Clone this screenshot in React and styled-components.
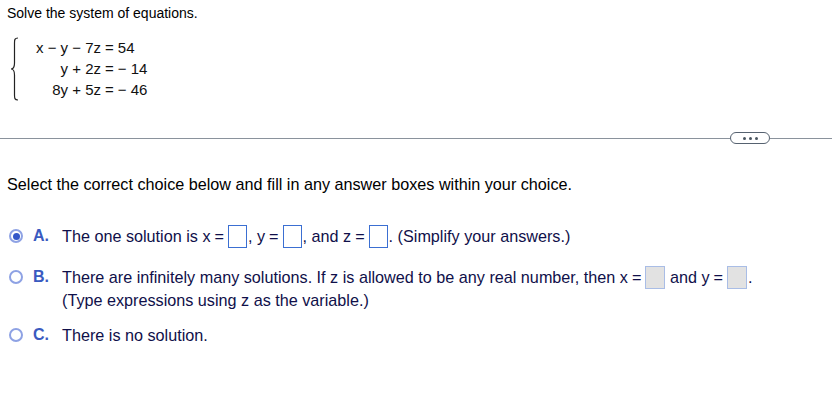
import styled, { createGlobalStyle } from 'styled-components';

const GlobalStyle = createGlobalStyle`
  html, body {
    margin: 0;
    padding: 0;
    background: #FFFFFF;
  }
  body {
    font-family: 'Liberation Sans', Arial, sans-serif;
    color: #000000;
  }
`;

function Brace() {
  return (
    <BraceSvg width="10" height="64" viewBox="0 0 10 64">
      <path
        d="M8 1 C4.5 1 4.5 3 4.5 6 L4.5 26 C4.5 30 3.5 32 1 32 C3.5 32 4.5 34 4.5 38 L4.5 58 C4.5 61 4.5 63 8 63"
        fill="none"
        stroke="#222222"
        strokeWidth="1.2"
      />
    </BraceSvg>
  );
}

function AnswerBox({ filled }) {
  return <Box $filled={filled} />;
}

function Radio({ checked }) {
  return <RadioRing $checked={checked}>{checked && <RadioDot />}</RadioRing>;
}

const equations = [
  { left: 'x − y − 7z', right: '54' },
  { left: 'y + 2z', right: '− 14' },
  { left: '8y + 5z', right: '− 46' },
];

function App() {
  return (
    <>
      <GlobalStyle />
      <Page>
        <Section>
          <Title>Solve the system of equations.</Title>
          <System>
            <Brace />
            <EqGrid>
              {equations.map((eq) => (
                <Eq key={eq.left}>
                  <EqLeft>{eq.left}</EqLeft>
                  <EqSign>=</EqSign>
                  <EqRight>{eq.right}</EqRight>
                </Eq>
              ))}
            </EqGrid>
          </System>
        </Section>

        <Divider>
          <Line />
          <Pill>
            <Dot />
            <Dot />
            <Dot />
          </Pill>
          <Line $short />
        </Divider>

        <Section>
          <Prompt>Select the correct choice below and fill in any answer boxes within your choice.</Prompt>
          <Choices>
            <Choice $gap={18}>
              <Radio checked />
              <Letter>A.</Letter>
              <ChoiceBody>
                <TextLine>
                  The one solution is x<Eqs>=</Eqs>
                  <AnswerBox />
                  <Comma>,</Comma> y<Eqs>=</Eqs>
                  <AnswerBox />
                  <Comma>,</Comma> and z<Eqs>=</Eqs>
                  <AnswerBox />
                  <Comma>.</Comma> (Simplify your answers.)
                </TextLine>
              </ChoiceBody>
            </Choice>
            <Choice $gap={12}>
              <Radio />
              <Letter>B.</Letter>
              <ChoiceBody>
                <TextLine>
                  There are infinitely many solutions. If z is allowed to be any real number, then x
                  <Eqs>=</Eqs>
                  <AnswerBox filled />
                  &nbsp;and y<Eqs>=</Eqs>
                  <AnswerBox filled />
                  <Comma>.</Comma>
                </TextLine>
                <TextLine>(Type expressions using z as the variable.)</TextLine>
              </ChoiceBody>
            </Choice>
            <Choice>
              <Radio />
              <Letter>C.</Letter>
              <ChoiceBody>
                <TextLine>There is no solution.</TextLine>
              </ChoiceBody>
            </Choice>
          </Choices>
        </Section>
      </Page>
    </>
  );
}

export default App;

const Page = styled.div`
  width: 832px;
  height: 407px;
  padding-top: 4px;
  box-sizing: border-box;
  overflow: hidden;
`;

const Section = styled.div`
  padding: 0 7px;
`;

const Title = styled.div`
  font-size: 14px;
  line-height: 18px;
  color: #000000;
`;

const System = styled.div`
  display: flex;
  align-items: center;
  margin-top: 15px;
  padding-left: 3px;
`;

const BraceSvg = styled.svg`
  display: block;
  flex-shrink: 0;
`;

const EqGrid = styled.div`
  display: grid;
  grid-template-columns: auto auto auto;
  margin-left: 16px;
  margin-top: -2px;
`;

const Eq = styled.div`
  display: contents;
`;

const EqLeft = styled.span`
  font-size: 15px;
  line-height: 21px;
  text-align: right;
  color: #111111;
`;

const EqSign = styled.span`
  font-size: 15px;
  line-height: 21px;
  padding: 0 4px;
  color: #111111;
`;

const EqRight = styled.span`
  font-size: 15px;
  line-height: 21px;
  color: #111111;
`;

const Divider = styled.div`
  display: flex;
  align-items: center;
  margin-top: 31px;
  height: 12px;
`;

const Line = styled.div`
  height: 1px;
  background: #8a929c;
  flex: ${(p) => (p.$short ? '0 0 62px' : '1')};
`;

const Pill = styled.div`
  width: 38px;
  height: 10px;
  border: 1px solid #566270;
  border-radius: 6px;
  display: flex;
  align-items: center;
  justify-content: center;
  gap: 3px;
  background: #FFFFFF;
`;

const Dot = styled.span`
  width: 3px;
  height: 3px;
  border-radius: 50%;
  background: #4a5560;
`;

const Prompt = styled.div`
  margin-top: 31px;
  font-size: 16.2px;
  line-height: 18px;
  color: #000000;
`;

const Choices = styled.div`
  margin-top: 32px;
  display: flex;
  flex-direction: column;
`;

const Choice = styled.div`
  display: flex;
  align-items: flex-start;
  padding-left: 2px;
  margin-bottom: ${(p) => (p.$gap ? `${p.$gap}px` : '0')};
`;

const RadioRing = styled.span`
  width: 14px;
  height: 14px;
  box-sizing: border-box;
  border: 2px solid #8ea2e4;
  border-radius: 50%;
  margin-top: 4px;
  display: flex;
  align-items: center;
  justify-content: center;
  flex-shrink: 0;
`;

const RadioDot = styled.span`
  width: 7px;
  height: 7px;
  border-radius: 50%;
  background: #3457c8;
`;

const Letter = styled.span`
  width: 29px;
  margin-left: 10px;
  font-size: 16px;
  font-weight: 700;
  line-height: 22px;
  color: #3a5ac0;
  flex-shrink: 0;
`;

const ChoiceBody = styled.div`
  display: flex;
  flex-direction: column;
`;

const TextLine = styled.div`
  display: flex;
  align-items: center;
  min-height: 23px;
  font-size: 16.2px;
  color: #10104a;
  white-space: pre;
`;

const Eqs = styled.span`
  margin: 0 4px;
`;

const Comma = styled.span`
  margin-left: 1px;
`;

const Box = styled.span`
  display: inline-block;
  width: ${(p) => (p.$filled ? '20px' : '19px')};
  height: 23px;
  box-sizing: border-box;
  border: 1px solid ${(p) => (p.$filled ? '#a9bde6' : '#3b6fd2')};
  background: ${(p) => (p.$filled ? '#e2e2e2' : '#FFFFFF')};
`;
